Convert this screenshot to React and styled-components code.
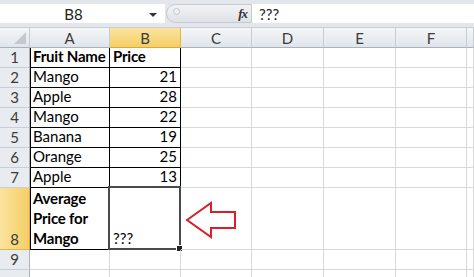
import React from "react";
import styled, { createGlobalStyle } from "styled-components";

const GlobalStyle = createGlobalStyle`
  html, body {
    margin: 0;
    padding: 0;
    background: #ffffff;
    overflow: hidden;
  }
  * {
    box-sizing: border-box;
  }
`;

const Page = styled.div`
  width: 474px;
  height: 277px;
  overflow: hidden;
  font-family: Lato, "Liberation Sans", sans-serif;
  color: #000;
`;

const FormulaBar = styled.div`
  display: flex;
  align-items: stretch;
  height: 28px;
  padding: 4px 0 4px 0;
  background: #e3e7ec;
  border-bottom: 1px solid #c9ced6;
`;

const NameBox = styled.div`
  position: relative;
  display: flex;
  align-items: center;
  justify-content: center;
  width: 165px;
  padding-right: 18px;
  background: #fff;
  font-size: 15px;
  color: #222;
`;

const DropArrow = styled.span`
  position: absolute;
  right: 8px;
  top: 9px;
  width: 0;
  height: 0;
  border-left: 4px solid transparent;
  border-right: 4px solid transparent;
  border-top: 4px solid #333;
`;

const FxArea = styled.div`
  display: flex;
  align-items: center;
  justify-content: space-between;
  width: 86px;
  padding: 0 4px 0 6px;
  background: linear-gradient(#f2f3f5, #dfe2e7);
  border: 1px solid #c4c9d1;
  border-radius: 10px 0 0 10px;
  margin-left: 1px;
`;

const Knob = styled.span`
  width: 7px;
  height: 7px;
  border-radius: 50%;
  border: 1px solid #c2c7ce;
  background: #eef0f2;
  margin-top: -4px;
`;

const Fx = styled.span`
  font-family: "Liberation Serif", serif;
  font-style: italic;
  font-weight: bold;
  font-size: 13px;
  color: #333;
  letter-spacing: -1px;
`;

const FormulaInput = styled.div`
  flex: 1;
  display: flex;
  align-items: center;
  padding-left: 7px;
  background: #fff;
  font-size: 15px;
  color: #222;
`;

const Sheet = styled.div`
  display: grid;
  grid-template-columns: 30px 80px 71px 71px 72px 72px 71px 1fr;
  grid-template-rows: 20px repeat(7, 20px) 62px 20px 20px;
`;

const ColHead = styled.div`
  display: flex;
  align-items: center;
  justify-content: center;
  font-size: 15px;
  color: #3b3b3b;
  background: ${(p) =>
    p.$active
      ? "linear-gradient(#fbe39f, #f5cf66)"
      : "linear-gradient(#f4f6f8, #e1e5ea)"};
  border-right: 1px solid ${(p) => (p.$active ? "#e2b54a" : "#c6ccd4")};
  border-bottom: 1px solid ${(p) => (p.$active ? "#d9a93c" : "#a9b1bc")};
`;

const Corner = styled.div`
  position: relative;
  background: linear-gradient(#f4f6f8, #e1e5ea);
  border-right: 1px solid #c6ccd4;
  border-bottom: 1px solid #a9b1bc;

  &::after {
    content: "";
    position: absolute;
    right: 3px;
    bottom: 3px;
    width: 0;
    height: 0;
    border-left: 12px solid transparent;
    border-bottom: 12px solid #c5c9ce;
  }
`;

const RowHead = styled.div`
  display: flex;
  align-items: flex-end;
  justify-content: center;
  padding-bottom: 1px;
  font-size: 15px;
  color: #3b3b3b;
  background: ${(p) => (p.$active ? "linear-gradient(90deg, #fbe39f, #f5cf66)" : "#e8ebef")};
  border-right: 1px solid ${(p) => (p.$active ? "#d9a93c" : "#a9b1bc")};
  border-bottom: 1px solid ${(p) => (p.$active ? "#e2b54a" : "#c9ced6")};
`;

const Cell = styled.div`
  position: relative;
  display: flex;
  align-items: flex-end;
  justify-content: ${(p) => (p.$num ? "flex-end" : "flex-start")};
  padding: 0 3px 1px 3px;
  font-size: 15px;
  line-height: 20px;
  white-space: ${(p) => (p.$wrap ? "normal" : "nowrap")};
  letter-spacing: ${(p) => (p.$bold ? "-0.2px" : "0")};
  font-weight: ${(p) => (p.$bold ? 700 : 400)};
  border-right: 1px solid ${(p) => (p.$boxed ? "#000" : "#d9d9d9")};
  border-bottom: 1px solid ${(p) => (p.$boxed ? "#000" : "#d9d9d9")};
  border-top: ${(p) => (p.$top ? "1px solid #000" : "none")};
  box-shadow: ${(p) => (p.$left ? "inset 1px 0 0 #000" : "none")};
  margin-top: ${(p) => (p.$top ? "-1px" : "0")};
`;

const Selection = styled.div`
  position: absolute;
  left: -2px;
  top: -2px;
  right: -1px;
  bottom: -1px;
  border: 2px solid #4a4a4a;
  pointer-events: none;

  &::after {
    content: "";
    position: absolute;
    right: -4px;
    bottom: -4px;
    width: 5px;
    height: 5px;
    background: #222;
    border: 1px solid #fff;
  }
`;

const ArrowWrap = styled.div`
  position: absolute;
  left: 4px;
  top: 13px;
  z-index: 2;
`;

const Arrow = () => (
  <ArrowWrap>
    <svg width="52" height="38" viewBox="0 0 52 38">
      <path
        d="M2 19 L26 2 L26 11 L50 11 L50 27 L26 27 L26 36 Z"
        fill="#fff"
        stroke="#d8202c"
        strokeWidth="2"
        strokeLinejoin="miter"
      />
    </svg>
  </ArrowWrap>
);

const columns = ["A", "B", "C", "D", "E", "F", ""];

const fruits = [
  ["Mango", 21],
  ["Apple", 28],
  ["Mango", 22],
  ["Banana", 19],
  ["Orange", 25],
  ["Apple", 13],
];

const EmptyCells = ({ count }) =>
  Array.from({ length: count }).map((_, i) => <Cell key={i} />);

export default function App() {
  return (
    <Page>
      <GlobalStyle />
      <FormulaBar>
        <NameBox>
          B8
          <DropArrow />
        </NameBox>
        <FxArea>
          <Knob />
          <Fx>fx</Fx>
        </FxArea>
        <FormulaInput>???</FormulaInput>
      </FormulaBar>

      <Sheet>
        <Corner />
        {columns.map((c, i) => (
          <ColHead key={i} $active={c === "B"}>
            {c}
          </ColHead>
        ))}

        <RowHead>1</RowHead>
        <Cell $boxed $bold $left>Fruit Name</Cell>
        <Cell $boxed $bold>Price</Cell>
        <EmptyCells count={5} />

        {fruits.map(([name, price], i) => (
          <React.Fragment key={i}>
            <RowHead>{i + 2}</RowHead>
            <Cell $boxed $left>{name}</Cell>
            <Cell $boxed $num>{price}</Cell>
            <EmptyCells count={5} />
          </React.Fragment>
        ))}

        <RowHead $active>8</RowHead>
        <Cell $boxed $bold $left $wrap>
          Average Price for Mango
        </Cell>
        <Cell $boxed>
          ???
          <Selection />
        </Cell>
        <Cell>
          <Arrow />
        </Cell>
        <EmptyCells count={4} />

        <RowHead>9</RowHead>
        <EmptyCells count={7} />
        <RowHead />
        <EmptyCells count={7} />
      </Sheet>
    </Page>
  );
}
